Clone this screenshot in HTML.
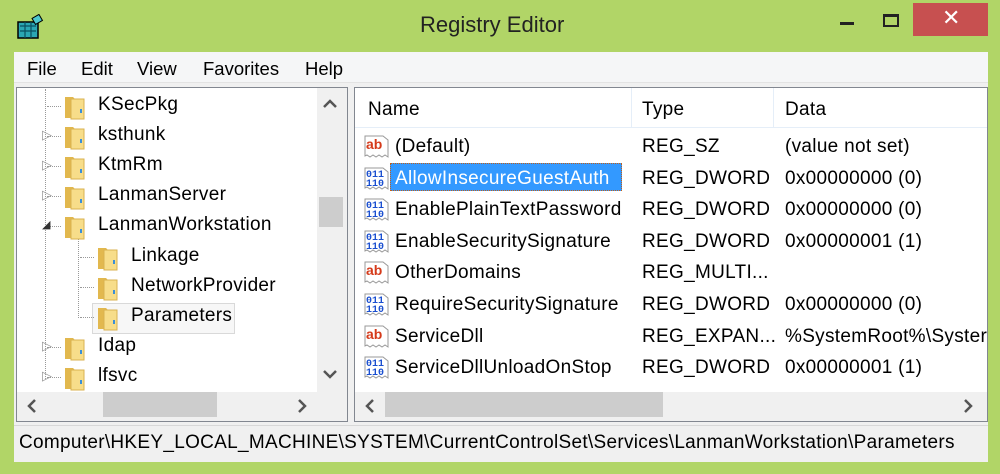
<!DOCTYPE html>
<html><head><meta charset="utf-8"><style>
*{margin:0;padding:0;box-sizing:border-box}
body{width:1000px;height:474px;background:#b1d567;position:relative;overflow:hidden;font-family:"Liberation Sans",sans-serif;color:#000}
.a{position:absolute;white-space:nowrap}
.t{font-size:19px;letter-spacing:0.3px}
.fold{position:absolute;width:24px;height:26px}
</style></head><body>
<svg class="a" style="left:16px;top:14px" width="30" height="26" viewBox="0 0 30 26">
<rect x="2" y="8" width="20" height="16" fill="#2aa7b3" stroke="#000" stroke-width="1.5"/>
<path d="M4 12h16M4 17h16M9 8v16M15 8v16" stroke="#0a5060" stroke-width="1.2"/>
<rect x="17" y="2" width="8" height="7" fill="#4cc8cf" stroke="#000" transform="rotate(-30 21 5)"/>
</svg>
<div class="a" style="left:420px;top:12px;font-size:22px;color:#222">Registry Editor</div>
<div class="a" style="left:840px;top:22px;width:14px;height:3px;background:#222"></div>
<div class="a" style="left:883px;top:14px;width:16px;height:13px;border:2px solid #222;border-top-width:3px"></div>
<div class="a" style="left:913px;top:3px;width:75px;height:33px;background:#c75050"></div>
<div class="a" style="left:942px;top:5px;font-size:22px;color:#fff">✕</div>
<div class="a" style="left:14px;top:52px;width:974px;height:410px;background:#f0f0f0"></div>
<div class="a" style="left:14px;top:52px;width:974px;height:31px;background:#f5f6f7;border-bottom:1px solid #e3e3e3"></div>
<div class="a" style="top:58px;left:27px;font-size:18.5px">File</div>
<div class="a" style="top:58px;left:81px;font-size:18.5px">Edit</div>
<div class="a" style="top:58px;left:137px;font-size:18.5px">View</div>
<div class="a" style="top:58px;left:203px;font-size:18.5px">Favorites</div>
<div class="a" style="top:58px;left:305px;font-size:18.5px">Help</div>
<div class="a" style="left:16px;top:87px;width:332px;height:335px;background:#fff;border:1px solid #828790"></div>
<div class="a" style="left:317px;top:88px;width:30px;height:304px;background:#f0f0f0"></div>
<div class="a" style="left:319px;top:197px;width:24px;height:30px;background:#cdcdcd"></div>
<svg class="a" style="left:322px;top:98px" width="16" height="12"><path d="M2 9l6-6 6 6" fill="none" stroke="#555" stroke-width="2.5"/></svg>
<svg class="a" style="left:322px;top:368px" width="16" height="12"><path d="M2 3l6 6 6-6" fill="none" stroke="#555" stroke-width="2.5"/></svg>
<div class="a" style="left:17px;top:392px;width:330px;height:29px;background:#f0f0f0"></div>
<div class="a" style="left:103px;top:392px;width:114px;height:25px;background:#cdcdcd"></div>
<svg class="a" style="left:26px;top:398px" width="12" height="16"><path d="M9 2l-6 6 6 6" fill="none" stroke="#555" stroke-width="2.5"/></svg>
<svg class="a" style="left:296px;top:398px" width="12" height="16"><path d="M3 2l6 6-6 6" fill="none" stroke="#555" stroke-width="2.5"/></svg>
<div class="a" style="left:45px;top:89px;height:290px;border-left:1px dotted #999"></div>
<div class="a" style="left:78px;top:236px;height:82px;border-left:1px dotted #999"></div>
<div id="tree"></div>
<div class="a" style="left:354px;top:87px;width:634px;height:335px;background:#fff;border:1px solid #828790"></div>
<div class="a" style="left:355px;top:88px;width:632px;height:40px;border-bottom:1px solid #e5eef8"></div>
<div class="a" style="left:631px;top:88px;height:40px;border-left:1px solid #e5eef8"></div>
<div class="a" style="left:773px;top:88px;height:40px;border-left:1px solid #e5eef8"></div>
<div class="a t" style="left:368px;top:99px">Name</div>
<div class="a t" style="left:642px;top:99px">Type</div>
<div class="a t" style="left:785px;top:99px">Data</div>
<div class="a" style="left:355px;top:392px;width:632px;height:29px;background:#f0f0f0"></div>
<div class="a" style="left:385px;top:392px;width:278px;height:25px;background:#cdcdcd"></div>
<svg class="a" style="left:364px;top:398px" width="12" height="16"><path d="M9 2l-6 6 6 6" fill="none" stroke="#555" stroke-width="2.5"/></svg>
<svg class="a" style="left:962px;top:398px" width="12" height="16"><path d="M3 2l6 6-6 6" fill="none" stroke="#555" stroke-width="2.5"/></svg>
<div class="a" style="left:390px;top:163px;width:232px;height:28px;background:#3399ff;border:1px dotted #c0601a"></div>
<div id="rows"></div>
<div class="a" style="left:14px;top:425px;width:974px;height:36px;background:#f0f0f0;border-top:1px solid #d8d8d8"></div>
<div class="a t" style="left:19px;top:432px">Computer\HKEY_LOCAL_MACHINE\SYSTEM\CurrentControlSet\Services\LanmanWorkstation\Parameters</div>
<script>
var tree=[["KSecPkg",0,0],["ksthunk",0,1],["KtmRm",0,1],["LanmanServer",0,1],["LanmanWorkstation",0,2],["Linkage",1,0],["NetworkProvider",1,0],["Parameters",1,0],["Idap",0,1],["lfsvc",0,1]];
var h="";
tree.forEach(function(r,i){var y=93+i*30.1;var fx=r[1]?96:63;
if(r[0]=="Parameters")h+='<div class="a" style="left:92px;top:'+(y-1)+'px;width:143px;height:31px;border:1px solid #d9d9d9;background:#f7f7f7"></div>';
h+='<div class="a" style="left:'+(fx-16)+'px;top:'+(y+13)+'px;width:14px;border-top:1px dotted #999"></div>';
if(r[2]==1)h+='<div class="a" style="left:42px;top:'+(y+4)+'px;font-size:13px;color:#999">▷</div>';
if(r[2]==2)h+='<div class="a" style="left:42px;top:'+(y+5)+'px;font-size:11px;color:#333">◢</div>';
h+='<svg class="fold" style="left:'+fx+'px;top:'+(y+1)+'px" viewBox="0 0 24 26"><path d="M2 3h8l2 2v19H2z" fill="#e2b84e"/><path d="M8 5h13v20H8z" fill="#f7dd8a" stroke="#d9b250" stroke-width="1"/><rect x="17" y="15" width="2" height="4" fill="#3a8fd8"/></svg>';
h+='<div class="a t" style="left:'+(fx+35)+'px;top:'+(y+1)+'px">'+r[0]+'</div>';});
document.getElementById("tree").innerHTML=h;
var rows=[["ab","(Default)","REG_SZ","(value not set)"],["01","AllowInsecureGuestAuth","REG_DWORD","0x00000000 (0)"],["01","EnablePlainTextPassword","REG_DWORD","0x00000000 (0)"],["01","EnableSecuritySignature","REG_DWORD","0x00000001 (1)"],["ab","OtherDomains","REG_MULTI...",""],["01","RequireSecuritySignature","REG_DWORD","0x00000000 (0)"],["ab","ServiceDll","REG_EXPAN...","%SystemRoot%\\Syster"],["01","ServiceDllUnloadOnStop","REG_DWORD","0x00000001 (1)"]];
h="";
rows.forEach(function(r,i){var y=135+i*31.6;
var ic=r[0]=="ab"?'<text x="2" y="14" font-size="14" font-weight="bold" fill="#d53a1a" font-family="Liberation Sans">ab</text>':'<text x="2" y="10" font-size="10" font-weight="bold" fill="#1a4fd0" font-family="Liberation Mono">011</text><text x="2" y="19" font-size="10" font-weight="bold" fill="#1a4fd0" font-family="Liberation Mono">110</text>';
h+='<svg class="a" style="left:364px;top:'+y+'px" width="26" height="24" viewBox="0 0 26 24"><path d="M1 1h18l5 4v17l-3-2-3 2-3-2-3 2-3-2-3 2-3-2-2 1z" fill="#fff" stroke="#999"/>'+ic+'</svg>';
h+='<div class="a t" style="left:395px;top:'+(y+1)+'px;color:'+(i==1?'#fff':'#000')+'">'+r[1]+'</div>';
h+='<div class="a t" style="left:642px;top:'+(y+1)+'px">'+r[2]+'</div>';
h+='<div class="a t" style="left:785px;top:'+(y+1)+'px">'+r[3]+'</div>';});
document.getElementById("rows").innerHTML=h;
</script>
</body></html>
